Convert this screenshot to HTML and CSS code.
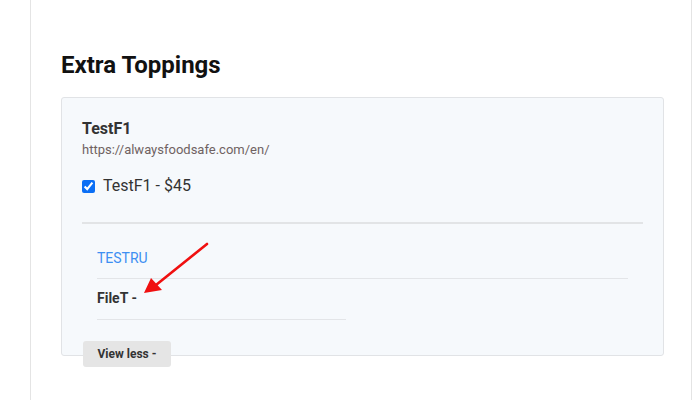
FILE: index.html
```html
<!DOCTYPE html>
<html>
<head>
<meta charset="utf-8">
<link rel="stylesheet" href="styles.css">
</head>
<body>
<div class="page">
  <h2 class="section-title">Extra Toppings</h2>
  <div class="card">
    <div class="item-name">TestF1</div>
    <div class="item-url">https://alwaysfoodsafe.com/en/</div>
    <label class="option"><input type="checkbox" checked> <span>TestF1 - $45</span></label>
    <hr class="divider">
    <div class="details">
      <div class="link-row">TESTRU</div>
      <div class="file-row">FileT -</div>
    </div>
    <button class="toggle">View less -</button>
  </div>
  <svg class="annotation" width="80" height="60" viewBox="0 0 80 60">
    <line x1="63" y1="3" x2="12" y2="44" stroke="#f01010" stroke-width="2.6" stroke-linecap="round"/>
    <polygon points="0,52 7,37 18,49" fill="#f01010"/>
  </svg>
</div>
</body>
</html>
```
FILE: styles.css
```css
html, body {
  margin: 0;
  padding: 0;
  background: #ffffff;
}
body {
  font-family: Roboto, "Liberation Sans", Arial, sans-serif;
  color: #333333;
}
.page {
  position: relative;
  margin-left: 30px;
  width: 662px;
  height: 400px;
  border-left: 1px solid #e4e4e4;
  border-right: 1px solid #e4e4e4;
  padding: 50px 0 0 30px;
  box-sizing: border-box;
}
.section-title {
  margin: 0 0 17px 0;
  font-size: 24px;
  line-height: 30px;
  font-weight: 700;
  color: #111111;
}
.card {
  position: relative;
  width: 603px;
  height: 259px;
  box-sizing: border-box;
  background: #f6f9fc;
  border: 1px solid #e1e3e6;
  border-radius: 3px;
  padding: 20px 20px 0 20px;
}
.item-name {
  font-size: 16px;
  font-weight: 700;
  line-height: 22px;
  color: #333333;
}
.item-url {
  font-size: 13px;
  line-height: 20px;
  color: #6f6262;
}
.option {
  display: flex;
  align-items: center;
  gap: 8px;
  margin-top: 15px;
  font-size: 16px;
  line-height: 22px;
  color: #333333;
}
.option input {
  margin: 0;
  width: 13px;
  height: 13px;
  accent-color: #0b6ff5;
}
.divider {
  margin: 25px 0 0 0;
  border: 0;
  height: 2px;
  background: #e2e4e6;
}
.details {
  padding: 0 15px;
  width: 531px;
}
.link-row {
  font-size: 14px;
  line-height: 20px;
  color: #3d8ff2;
  padding: 24px 0 10px 0;
  border-bottom: 1px solid #e3e5e8;
}
.file-row {
  font-size: 14px;
  font-weight: 700;
  line-height: 20px;
  color: #333333;
  padding: 9px 0 11px 0;
  width: 249px;
  border-bottom: 1px solid #e3e5e8;
}
.toggle {
  position: absolute;
  left: 21px;
  bottom: -12px;
  width: 88px;
  height: 26px;
  border: 0;
  border-radius: 3px;
  background: #e5e5e5;
  font-family: Roboto, "Liberation Sans", Arial, sans-serif;
  font-size: 12px;
  font-weight: 700;
  color: #333333;
  padding: 0;
}
.annotation {
  position: absolute;
  left: 113px;
  top: 241px;
  overflow: visible;
}
```
